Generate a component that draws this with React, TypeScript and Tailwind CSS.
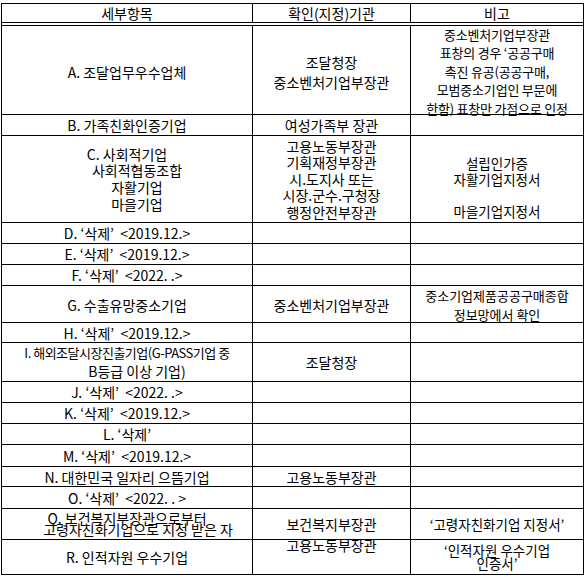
import React from 'react';

type RowProps = {
  h: string;
  a?: React.ReactNode;
  b?: React.ReactNode;
  c?: React.ReactNode;
  last?: boolean;
};

const Row = ({ h, a, b, c, last }: RowProps) => (
  <div className={`grid grid-cols-[251px_158px_172px] ${h} ${last ? '' : 'border-b border-black'}`}>
    <div className="flex flex-col items-center justify-center border-r border-black text-center leading-[16px]">{a}</div>
    <div className="flex flex-col items-center justify-center border-r border-black text-center leading-[16px]">{b}</div>
    <div className="flex flex-col items-center justify-center text-center text-[13.5px] leading-[16px]">{c}</div>
  </div>
);

const deleted = (label: string, date: string) => `${label} ‘삭제’ \u00a0${date}`;

export default function App() {
  return (
    <div className="min-h-[577px] bg-white pl-[1px] pt-[3px] font-['Noto_Sans_CJK_KR',sans-serif] text-[14px] text-black">
      <div className="w-[583px] border border-black">
        <Row h="h-[19px]" a="세부항목" b="확인(지정)기관" c={<span className="text-[14px]">비고</span>} />
        <div className="h-[3px] border-b border-black" />

        <Row
          h="h-[89px]"
          a="A. 조달업무우수업체"
          b={
            <div className="leading-[20px]">
              <div>조달청장</div>
              <div>중소벤처기업부장관</div>
            </div>
          }
          c={
            <div className="text-[13px] leading-[18.4px] tracking-[-0.2px]">
              <div>중소벤처기업부장관</div>
              <div>표창의 경우 ‘공공구매</div>
              <div>촉진 유공(공공구매,</div>
              <div>모범중소기업인 부문에</div>
              <div>한함) 표창만 가점으로 인정</div>
            </div>
          }
        />
        <Row h="h-[21px]" a="B. 가족친화인증기업" b="여성가족부 장관" />
        <Row
          h="h-[87px]"
          a={
            <div className="leading-[16.6px]">
              <div>C. 사회적기업</div>
              <div className="pl-[20px]">사회적협동조합</div>
              <div className="pl-[20px]">자활기업</div>
              <div className="pl-[20px]">마을기업</div>
            </div>
          }
          b={
            <div className="leading-[16.5px]">
              <div>고용노동부장관</div>
              <div>기획재정부장관</div>
              <div>시.도지사 또는</div>
              <div>시장.군수.구청장</div>
              <div>행정안전부장관</div>
            </div>
          }
          c={
            <div className="leading-[16.2px]">
              <div>&nbsp;</div>
              <div>설립인가증</div>
              <div>자활기업지정서</div>
              <div>&nbsp;</div>
              <div>마을기업지정서</div>
            </div>
          }
        />
        <Row h="h-[21px]" a={deleted('D.', '<2019.12.>')} />
        <Row h="h-[21px]" a={deleted('E.', '<2019.12.>')} />
        <Row h="h-[21px]" a={deleted('F.', '<2022. .>')} />
        <Row
          h="h-[37px]"
          a="G. 수출유망중소기업"
          b="중소벤처기업부장관"
          c={
            <div className="text-[13px] leading-[19px]">
              <div>중소기업제품공공구매종합</div>
              <div>정보망에서 확인</div>
            </div>
          }
        />
        <Row h="h-[20px]" a={deleted('H.', '<2019.12.>')} />
        <Row
          h="h-[39px]"
          a={
            <div className="leading-[19px]">
              <div className="text-[13px] tracking-[-0.5px]">I. 해외조달시장진출기업(G-PASS기업 중</div>
              <div className="pl-[20px]">B등급 이상 기업)</div>
            </div>
          }
          b="조달청장"
        />
        <Row h="h-[21px]" a={deleted('J.', '<2022. .>')} />
        <Row h="h-[21px]" a={deleted('K.', '<2019.12.>')} />
        <Row h="h-[21px]" a="L. ‘삭제’" />
        <Row h="h-[22px]" a={deleted('M.', '<2019.12.>')} />
        <Row h="h-[20px]" a="N. 대한민국 일자리 으뜸기업" b="고용노동부장관" />
        <Row h="h-[22px]" a={deleted('O.', '<2022. . >')} />
        <Row
          h="h-[31px]"
          a={
            <div className="leading-[11.5px]">
              <div>Q. 보건복지부장관으로부터</div>
              <div className="pl-[22px]">고령자친화기업으로 지정 받은 자</div>
            </div>
          }
          b="보건복지부장관"
          c="‘고령자친화기업 지정서’"
        />
        <Row
          h="h-[34px]"
          last
          a="R. 인적자원 우수기업"
          b={<div className="mb-auto leading-[11px]">고용노동부장관</div>}
          c={
            <div className="leading-[13px]">
              <div>‘인적자원 우수기업</div>
              <div>인증서’</div>
            </div>
          }
        />
      </div>
    </div>
  );
}
